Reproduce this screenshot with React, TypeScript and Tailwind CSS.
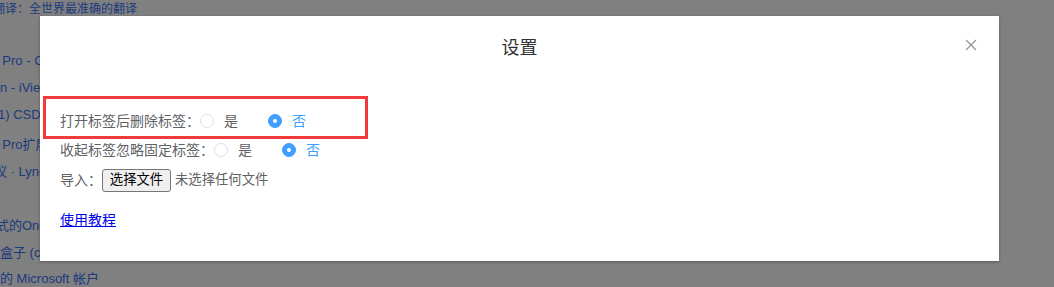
import React from 'react';

const font = { fontFamily: '"Liberation Sans", "Noto Sans CJK SC", sans-serif' };

const bgLines = [
  { text: '翻译：全世界最准确的翻译', cls: 'mt-0 -ml-[7px] text-[12px]' },
  { text: 'L Pro - Chrome 网上应用店', cls: 'mt-[34px] -ml-[8px] text-[13px]' },
  { text: 'n - iViewer', cls: 'mt-[9px] ml-0 text-[13px]' },
  { text: '1) CSDN博客', cls: 'mt-[9px] -ml-[2px] text-[13px]' },
  { text: 'L Pro扩展', cls: 'mt-[12px] -ml-[8px] text-[13px]' },
  { text: '议 · Lync', cls: 'mt-[9px] -ml-[6px] text-[13px]' },
  { text: '式的OneNote', cls: 'mt-[36px] -ml-[4px] text-[13px]' },
  { text: '盒子 (cookie)', cls: 'mt-[9px] ml-0 text-[13px]' },
  { text: '的 Microsoft 帐户', cls: 'mt-[8px] ml-0 text-[13px]' },
];

type RadioRowProps = {
  label: string;
  value: boolean;
};

function Radio({ checked, text }: { checked: boolean; text: string }) {
  return (
    <label className="mr-[30px] flex cursor-pointer items-center">
      <span
        className={
          checked
            ? 'flex h-[14px] w-[14px] items-center justify-center rounded-full border border-[#409eff] bg-[#409eff]'
            : 'flex h-[14px] w-[14px] items-center justify-center rounded-full border border-[#dcdfe6] bg-white'
        }
      >
        {checked && <span className="h-[4px] w-[4px] rounded-full bg-white" />}
      </span>
      <span className={checked ? 'pl-[10px] text-[#409eff]' : 'pl-[10px] text-[#606266]'}>{text}</span>
    </label>
  );
}

function RadioRow({ label, value }: RadioRowProps) {
  return (
    <div className="flex h-[30px] items-center">
      <span>{label}</span>
      <Radio checked={value} text="是" />
      <Radio checked={!value} text="否" />
    </div>
  );
}

export default function App() {
  return (
    <div className="relative h-[287px] w-[1054px] overflow-hidden bg-[#808080]" style={font}>
      <div className="flex flex-col text-[#1b3a7e]">
        {bgLines.map((l) => (
          <div key={l.text} className={`h-[18px] whitespace-nowrap leading-[18px] ${l.cls}`}>
            {l.text}
          </div>
        ))}
      </div>

      <div className="absolute left-[40px] top-[16px] flex h-[245px] w-[959px] flex-col bg-white shadow-[0_1px_3px_rgba(0,0,0,0.3)]">
        <div className="relative flex items-center justify-center px-5 pb-[10px] pt-5">
          <span className="text-[18px] leading-[24px] text-[#303133]">设置</span>
          <button className="absolute right-[20px] top-[21px] flex h-[16px] w-[16px] items-center justify-center">
            <svg width="12" height="12" viewBox="0 0 12 12">
              <path d="M1 1 L11 11 M11 1 L1 11" stroke="#909399" strokeWidth="1.2" />
            </svg>
          </button>
        </div>

        <div className="flex flex-col px-5 pt-[36px] text-[14px] text-[#606266]">
          <div className="-mb-px">
            <RadioRow label="打开标签后删除标签：" value={false} />
          </div>
          <RadioRow label="收起标签忽略固定标签：" value={false} />
          <div className="flex h-[30px] items-center">
            <span>导入：</span>
            <button className="h-[23px] w-[69px] rounded-[3px] border border-[#767676] bg-[#efefef] text-[13.33px] text-black">
              选择文件
            </button>
            <span className="pl-[4px] text-[13.33px] text-[#606266]">未选择任何文件</span>
          </div>
          <div className="mt-[15px] flex h-[20px] items-center">
            <a href="#" className="text-[14px] text-[#0000ee] underline">
              使用教程
            </a>
          </div>
        </div>
      </div>

      <div className="absolute left-[43px] top-[96px] h-[43px] w-[325px] border-[3px] border-[#f23a3a]" />
    </div>
  );
}
